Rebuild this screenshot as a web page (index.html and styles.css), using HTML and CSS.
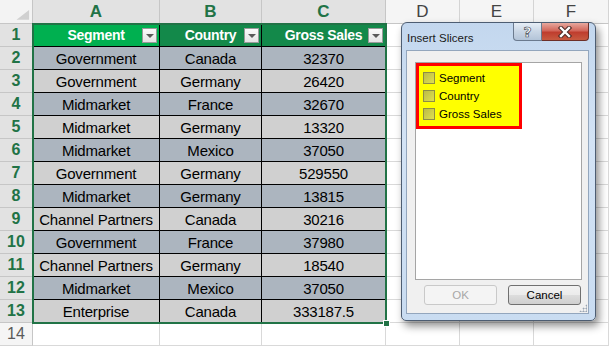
FILE: index.html
```html
<!DOCTYPE html>
<html lang="en">

<head>
    <meta charset="UTF-8">
    <meta name="viewport" content="width=device-width, initial-scale=1.0">
    <title>Insert Slicers</title>

    <link rel="stylesheet" href="styles.css">
</head>

<body>
    <div id="sheet">
        <div class="row">
            <div class="corner"><svg width="33" height="24" viewBox="0 0 33 24"><polygon points="30,10 30,20 17,20" fill="#d0d0d0" /></svg></div>
            <div class="colhead sel">A</div>
            <div class="colhead sel">B</div>
            <div class="colhead sel">C</div>
            <div class="colhead">D</div>
            <div class="colhead">E</div>
            <div class="colhead">F</div>
        </div>

        <div class="row">
            <div class="rowhead sel">1</div>
            <div class="cell head head_a">Segment<span class="filter"></span></div>
            <div class="cell head">Country<span class="filter"></span></div>
            <div class="cell head">Gross Sales<span class="filter"></span></div>
            <div class="grid"></div><div class="grid"></div><div class="grid"></div>
        </div>
        <div class="row even">
            <div class="rowhead sel">2</div>
            <div class="cell">Government</div><div class="cell">Canada</div><div class="cell">32370</div>
            <div class="grid"></div><div class="grid"></div><div class="grid"></div>
        </div>
        <div class="row odd">
            <div class="rowhead sel">3</div>
            <div class="cell">Government</div><div class="cell">Germany</div><div class="cell">26420</div>
            <div class="grid"></div><div class="grid"></div><div class="grid"></div>
        </div>
        <div class="row even">
            <div class="rowhead sel">4</div>
            <div class="cell">Midmarket</div><div class="cell">France</div><div class="cell">32670</div>
            <div class="grid"></div><div class="grid"></div><div class="grid"></div>
        </div>
        <div class="row odd">
            <div class="rowhead sel">5</div>
            <div class="cell">Midmarket</div><div class="cell">Germany</div><div class="cell">13320</div>
            <div class="grid"></div><div class="grid"></div><div class="grid"></div>
        </div>
        <div class="row even">
            <div class="rowhead sel">6</div>
            <div class="cell">Midmarket</div><div class="cell">Mexico</div><div class="cell">37050</div>
            <div class="grid"></div><div class="grid"></div><div class="grid"></div>
        </div>
        <div class="row odd">
            <div class="rowhead sel">7</div>
            <div class="cell">Government</div><div class="cell">Germany</div><div class="cell">529550</div>
            <div class="grid"></div><div class="grid"></div><div class="grid"></div>
        </div>
        <div class="row even">
            <div class="rowhead sel">8</div>
            <div class="cell">Midmarket</div><div class="cell">Germany</div><div class="cell">13815</div>
            <div class="grid"></div><div class="grid"></div><div class="grid"></div>
        </div>
        <div class="row odd">
            <div class="rowhead sel">9</div>
            <div class="cell">Channel Partners</div><div class="cell">Canada</div><div class="cell">30216</div>
            <div class="grid"></div><div class="grid"></div><div class="grid"></div>
        </div>
        <div class="row even">
            <div class="rowhead sel">10</div>
            <div class="cell">Government</div><div class="cell">France</div><div class="cell">37980</div>
            <div class="grid"></div><div class="grid"></div><div class="grid"></div>
        </div>
        <div class="row odd">
            <div class="rowhead sel">11</div>
            <div class="cell">Channel Partners</div><div class="cell">Germany</div><div class="cell">18540</div>
            <div class="grid"></div><div class="grid"></div><div class="grid"></div>
        </div>
        <div class="row even">
            <div class="rowhead sel">12</div>
            <div class="cell">Midmarket</div><div class="cell">Mexico</div><div class="cell">37050</div>
            <div class="grid"></div><div class="grid"></div><div class="grid"></div>
        </div>
        <div class="row odd">
            <div class="rowhead sel">13</div>
            <div class="cell">Enterprise</div><div class="cell">Canada</div><div class="cell">333187.5</div>
            <div class="grid"></div><div class="grid"></div><div class="grid"></div>
        </div>
        <div class="row">
            <div class="rowhead">14</div>
            <div class="grid"></div><div class="grid"></div><div class="grid"></div>
            <div class="grid"></div><div class="grid"></div><div class="grid"></div>
        </div>

        <!-- selection box round the table -->
        <div id="selection"><span class="handle"></span></div>

        <div id="dialog">
            <div class="titlebar">
                <span class="title">Insert Slicers</span>
                <span class="tbtn help">?</span>
                <span class="tbtn close">
                    <svg width="16" height="12" viewBox="0 0 16 12">
                        <path d="M4 2 L12 10 M12 2 L4 10" stroke="#4a2a26" stroke-width="4.4" stroke-linecap="square" />
                        <path d="M4 2 L12 10 M12 2 L4 10" stroke="#ffffff" stroke-width="2.4" stroke-linecap="square" />
                    </svg>
                </span>
            </div>
            <div class="pane">
                <div class="listbox">
                    <div class="highlight">
                        <label class="item"><span class="box"></span>Segment</label>
                        <label class="item"><span class="box"></span>Country</label>
                        <label class="item"><span class="box"></span>Gross Sales</label>
                    </div>
                </div>
                <div class="buttons">
                    <span class="btn disabled">OK</span>
                    <span class="btn">Cancel</span>
                </div>
                <span class="grip"></span>
            </div>
        </div>
    </div>
</body>

</html>
```

FILE: styles.css
```css
body {
    margin: 0;
    background-color: #ffffff;
    overflow: hidden;
}

#sheet {
    position: relative;

    display: grid;
    grid-template-columns: 33px 127px 102px 124px 74px 74px 75px;
    grid-template-rows: 24px;
    grid-auto-rows: 23px;

    font-family: "Liberation Sans", Arial, sans-serif;
    font-size: 15px;
    color: #000000;
}

.row {
    display: contents;
}

.corner,
.colhead,
.rowhead,
.cell,
.grid {
    box-sizing: border-box;
    display: flex;
    align-items: center;
    justify-content: center;
}

.corner {
    background-color: #f3f3f3;
    border-right: 1px solid #c6c6c6;
    border-bottom: 1px solid #c6c6c6;
}

.colhead {
    background-color: #f5f5f5;
    border-right: 1px solid #d4d4d4;
    border-bottom: 1px solid #c6c6c6;

    font-size: 17px;
    color: #444444;
    padding-top: 1px;
}

.colhead.sel {
    background-color: #e2e2e2;
    border-right-color: #c6c6c6;
    color: #217346;
    font-weight: bold;
}

.rowhead {
    background-color: #f5f5f5;
    border-right: 1px solid #c6c6c6;
    border-bottom: 1px solid #d4d4d4;

    font-size: 16px;
    color: #5a5a5a;
}

.rowhead.sel {
    background-color: #e2e2e2;
    border-bottom-color: #c6c6c6;
    color: #217346;
    font-weight: bold;
}

.grid {
    border-right: 1px solid #d9d9d9;
    border-bottom: 1px solid #d9d9d9;
}

.cell {
    border-right: 1px solid #000000;
    border-bottom: 1px solid #000000;
    letter-spacing: -0.2px;
    white-space: nowrap;
}

.even .cell {
    background-color: #acb5bf;
}

.odd .cell {
    background-color: #d0d0d0;
}

.head {
    position: relative;
    background-color: #13894a;
    color: #ffffff;
    font-weight: bold;
    font-size: 14px;
    letter-spacing: -0.3px;
}

.head_a {
    background-color: #00b050;
}

.filter {
    position: absolute;
    right: 2px;
    top: 4px;

    box-sizing: border-box;
    width: 15px;
    height: 15px;
    border: 1px solid #9a9a9a;
    background: linear-gradient(#fbfbfb, #e4e4e4);
}

.filter::after {
    content: "";
    position: absolute;
    left: 3px;
    top: 5px;
    border-left: 4px solid transparent;
    border-right: 4px solid transparent;
    border-top: 4px solid #5a5a5a;
}

#selection {
    position: absolute;
    left: 32px;
    top: 23px;
    width: 355px;
    height: 301px;
    box-sizing: border-box;
    border: 2px solid #217346;
    pointer-events: none;
}

.handle {
    position: absolute;
    right: -5px;
    bottom: -5px;
    width: 5px;
    height: 5px;
    background-color: #217346;
    border: 1px solid #ffffff;
}

/* the dialog floats over the sheet */
#dialog {
    position: absolute;
    left: 401px;
    top: 22px;
    width: 195px;
    height: 299px;
    box-sizing: border-box;

    display: flex;
    flex-direction: column;

    border: 1px solid #4d5d72;
    border-radius: 6px 6px 5px 5px;
    background: linear-gradient(#c3d7ee, #d3e3f5 40%, #c9dcf1);
    box-shadow: 3px 5px 8px rgba(0, 0, 0, 0.45);

    font-family: "Liberation Sans", Arial, sans-serif;
    font-size: 11.5px;
}

.titlebar {
    height: 27px;
    display: flex;
    align-items: flex-start;
    padding: 0 6px 0 5px;
}

.title {
    flex: 1;
    padding-top: 9px;
    color: #1a1a1a;
}

.tbtn {
    box-sizing: border-box;
    height: 18px;
    display: flex;
    align-items: center;
    justify-content: center;
    border: 1px solid #6b7a8e;
    border-top: none;
}

.help {
    width: 29px;
    border-radius: 0 0 0 4px;
    background: linear-gradient(#e7eef6, #c9d6e5 50%, #b3c4d8);

    font-family: "DejaVu Sans", sans-serif;
    font-size: 14px;
    font-weight: bold;
    color: #ffffff;
    -webkit-text-stroke: 0.7px #4a4f58;
}

.close {
    width: 47px;
    border-left: none;
    border-radius: 0 0 4px 0;
    border-color: #6d2f28;
    background: linear-gradient(#e7a89e, #d2665a 45%, #bf3d2e 55%, #c75a40);
}

.pane {
    position: relative;
    flex: 1;
    margin: 0 6px 6px 4px;
    box-sizing: border-box;
    padding: 11px 6px 0 8px;

    background-color: #f0f0f0;
    border: 1px solid #93a6bd;
}

.listbox {
    box-sizing: border-box;
    height: 218px;
    background-color: #ffffff;
    border: 1px solid #a5a5a5;
}

.highlight {
    box-sizing: border-box;
    width: 106px;
    height: 66px;
    padding: 3px 0 0 4px;

    background-color: #ffff00;
    border: 3px solid #ff0000;
}

.item {
    height: 18px;
    display: flex;
    align-items: center;
    gap: 4px;
    color: #000000;
}

.box {
    box-sizing: border-box;
    width: 12px;
    height: 12px;
    border: 1px solid #8c8c46;
    background: linear-gradient(135deg, #bcbc46, #dede50);
}

.buttons {
    display: flex;
    justify-content: space-between;
    margin: 5px 1px 0 9px;
}

.btn {
    box-sizing: border-box;
    width: 73px;
    height: 20px;
    display: flex;
    align-items: center;
    justify-content: center;

    border: 1px solid #707070;
    border-radius: 3px;
    background: linear-gradient(#f2f2f2, #ebebeb 50%, #dddddd 51%, #cfcfcf);
    color: #000000;
}

.btn.disabled {
    border-color: #c9c9c9;
    background: #f4f4f4;
    color: #a8a8a8;
}

.grip {
    position: absolute;
    right: 1px;
    bottom: 1px;
    width: 8px;
    height: 8px;
    background: radial-gradient(circle, #9aa5b3 45%, transparent 50%) 0 0 / 3px 3px;
    clip-path: polygon(100% 0, 100% 100%, 0 100%);
}
```
